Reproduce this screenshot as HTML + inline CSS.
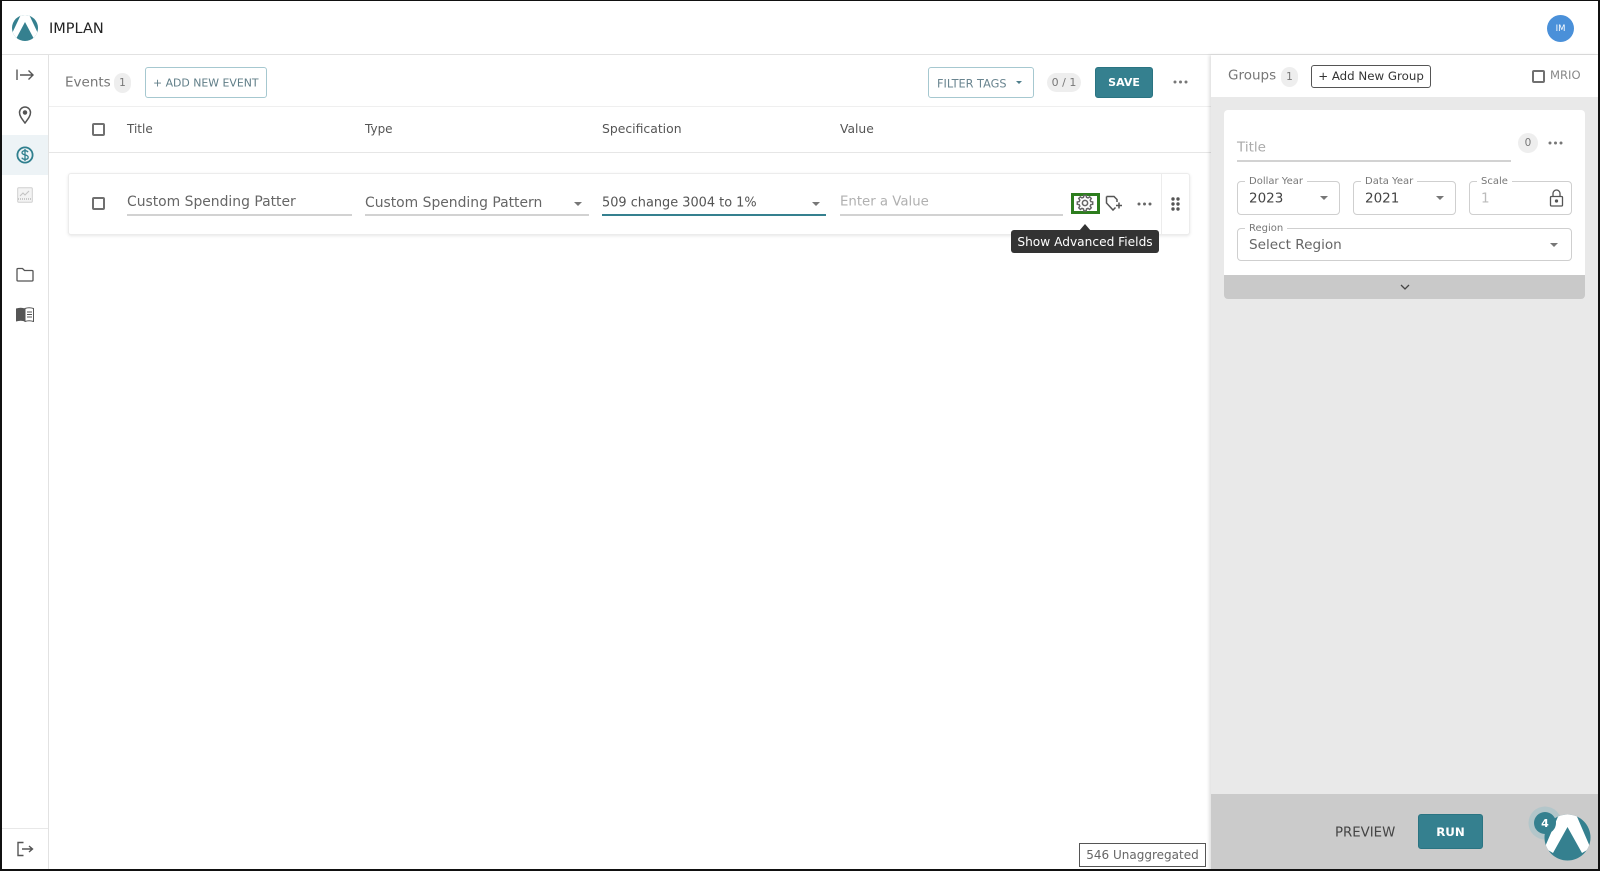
<!DOCTYPE html>
<html><head><meta charset="utf-8"><style>
html,body{margin:0;padding:0;background:#fff}
#p{position:relative;width:1600px;height:871px;overflow:hidden;background:#fff;font-family:"DejaVu Sans","Liberation Sans",sans-serif;color:#555}
#p div,#p svg,#p span.t{position:absolute}
.t{white-space:nowrap;line-height:1;transform:translateY(calc(-50% + 2px))}
.cb{width:9px;height:9px;border:2px solid #707070;border-radius:2px;background:#fff}
.ul{height:2px;background:#d2d2d2}
.f{border:1px solid #cfcfcf;border-radius:4px;background:#fff;box-sizing:border-box}
.lb{background:#fff;padding:0 4px;font-size:10px;color:#777}
.bd{background:#eee;border-radius:50%;text-align:center;color:#777}
.car{width:0;height:0;border-left:5px solid transparent;border-right:5px solid transparent;border-top:5px solid #777}
</style></head><body><div id="p">
<!-- header -->
<svg style="left:12px;top:15px" width="26" height="26" viewBox="0 0 26 26"><defs><clipPath id="c1"><circle cx="13" cy="13" r="13"/></clipPath></defs><circle cx="13" cy="13" r="13" fill="#35808f"/><path clip-path="url(#c1)" d="M9.200 -1H16.800L26.500 19.500 21.500 23 13 7 4.500 23 -.5 19.500Z" fill="#fff"/></svg>
<span class="t" style="left:49px;top:27px;font-size:14.500px;color:#222">IMPLAN</span>
<div style="left:1547px;top:15px;width:27px;height:27px;border-radius:50%;background:#4a90d9;color:#fff;font-size:8.500px;line-height:28px;text-align:center">IM</div>
<div style="left:0;top:54px;width:1600px;height:1px;background:#e2e2e2"></div>
<!-- sidebar -->
<div style="left:48px;top:55px;width:1px;height:815px;background:#e2e2e2"></div>
<div style="left:2px;top:135px;width:46px;height:40px;background:#edf3f6"></div>
<svg style="left:15px;top:66px" width="20" height="18" viewBox="0 0 20 18" fill="none" stroke="#555" stroke-width="1.400"><path d="M2 3.500V14M5 9H18M13.500 4.500L18 9l-4.500 4.500"/></svg>
<svg style="left:17px;top:106px" width="16" height="18" viewBox="0 0 16 18" fill="none" stroke="#555" stroke-width="1.500"><path d="M8 17C5 13 2.500 10 2.500 6.500a5.500 5.500 0 0 1 11 0C13.500 10 11 13 8 17Z"/><circle cx="8" cy="6.500" r="1.500" fill="#555"/></svg>
<svg style="left:16px;top:146px" width="18" height="18" viewBox="0 0 18 18" fill="none" stroke="#2f7f8e" stroke-width="1.800"><circle cx="9" cy="9" r="7.600"/><path d="M12 6.200C11.400 5 10.200 4.700 9 4.700 7.400 4.700 6 5.400 6 6.800 6 9.500 12.200 8.300 12.200 11.200 12.200 12.600 10.700 13.300 9 13.300 7.600 13.300 6.400 12.800 5.800 11.700M9 3v12" stroke-width="1.300"/></svg>
<svg style="left:17px;top:187px" width="16" height="16" viewBox="0 0 16 16" fill="none"><rect x=".7" y=".7" width="14.600" height="14.600" rx="1" fill="#f3f3f3" stroke="#cfcfcf"/><path d="M3 9l3-3 2 2 4-4" stroke="#c4c4c4" stroke-width="1.100"/><path d="M1 12h14" stroke="#c8c8c8" stroke-width="2" stroke-dasharray="1 1"/></svg>
<svg style="left:16px;top:267px" width="18" height="15" viewBox="0 0 18 15" fill="none" stroke="#555" stroke-width="1.300"><path d="M1 13V2.500Q1 1.500 2 1.500H6.500L8.500 3.500H16Q17 3.500 17 4.500V13Q17 14 16 14H2Q1 14 1 13Z"/></svg>
<svg style="left:16px;top:307px" width="18" height="15" viewBox="0 0 18 15"><path d="M0 1.500Q5 0 9 1.500V14.500Q5 13 0 14.500Z" fill="#555"/><path d="M9 1.500Q13 0 17.500 1.500V14.500Q13 13 9 14.500Z" fill="#fff" stroke="#555"/><path d="M11 5h5M11 7.500h5M11 10h5" stroke="#555"/></svg>
<div style="left:2px;top:828px;width:46px;height:1px;background:#e8e8e8"></div>
<svg style="left:16px;top:841px" width="18" height="16" viewBox="0 0 18 16" fill="none" stroke="#555" stroke-width="1.400"><path d="M7.500 1.500H2V14.500H7.500M6 8H16.500M13 5l3.500 3-3.500 3"/></svg>
<!-- toolbar -->
<span class="t" style="left:65px;top:81px;font-size:13.500px;color:#777">Events</span>
<div class="bd" style="left:114px;top:73px;width:17px;height:20px;font-size:10.500px;line-height:21px;border-radius:9px">1</div>
<div style="left:145px;top:67px;width:122px;height:31px;box-sizing:border-box;border:1px solid #a6c8d0;border-radius:3px"></div>
<span class="t" style="left:153px;top:82px;font-size:10.900px;color:#5f7d87">+ ADD NEW EVENT</span>
<div style="left:928px;top:67px;width:106px;height:31px;box-sizing:border-box;border:1px solid #a6c8d0;border-radius:3px"></div>
<span class="t" style="left:937px;top:82px;font-size:11.300px;color:#6a8590">FILTER TAGS</span>
<div class="car" style="left:1016px;top:81px;border-left-width:3.500px;border-right-width:3.500px;border-top:3.500px solid #4f7f8c"></div>
<div style="left:1047px;top:73px;width:34px;height:19px;border-radius:10px;background:#eee;color:#777;font-size:11px;line-height:19px;text-align:center">0 / 1</div>
<div style="left:1095px;top:67px;width:58px;height:31px;box-sizing:border-box;background:#35808f;border:1px solid #2a7482;border-radius:3px;color:#fff;font-size:11px;font-weight:bold;line-height:29px;text-align:center">SAVE</div>
<svg style="left:1173px;top:80px" width="15" height="4"><circle cx="2" cy="2" r="1.500" fill="#777"/><circle cx="7.500" cy="2" r="1.500" fill="#777"/><circle cx="13" cy="2" r="1.500" fill="#777"/></svg>
<div style="left:49px;top:106px;width:1162px;height:1px;background:#efefef"></div>
<!-- table head -->
<div class="cb" style="left:92px;top:123px"></div>
<span class="t" style="left:127px;top:127px;font-size:12px;color:#555">Title</span>
<span class="t" style="left:365px;top:127px;font-size:12px;color:#555">Type</span>
<span class="t" style="left:602px;top:127px;font-size:12.400px;color:#555">Specification</span>
<span class="t" style="left:840px;top:127px;font-size:12.300px;color:#555">Value</span>
<div style="left:49px;top:152px;width:1162px;height:1px;background:#e6e6e6"></div>
<!-- card -->
<div style="left:68px;top:173px;width:1122px;height:62px;box-sizing:border-box;border:1px solid #ececec;border-radius:3px;background:#fff;box-shadow:0 1px 3px rgba(0,0,0,.1)"></div>
<div class="cb" style="left:92px;top:197px"></div>
<span class="t" style="left:127px;top:201px;font-size:13.900px;color:#666">Custom Spending Patter</span>
<div class="ul" style="left:127px;top:214px;width:225px"></div>
<span class="t" style="left:365px;top:202px;font-size:13.900px;color:#666">Custom Spending Pattern</span>
<div class="ul" style="left:365px;top:214px;width:224px"></div>
<div class="car" style="left:574px;top:202px;border-left-width:4.500px;border-right-width:4.500px;border-top-width:4.500px"></div>
<span class="t" style="left:602px;top:202px;font-size:12.900px;color:#555">509 change 3004 to 1%</span>
<div class="ul" style="left:602px;top:214px;width:224px;background:#35808f"></div>
<div class="car" style="left:812px;top:202px;border-left-width:4.500px;border-right-width:4.500px;border-top-width:4.500px"></div>
<span class="t" style="left:840px;top:200px;font-size:13.300px;color:#b0b0b0">Enter a Value</span>
<div class="ul" style="left:840px;top:214px;width:223px"></div>
<div style="left:1071px;top:193px;width:29px;height:21px;box-sizing:border-box;border:3px solid #2d7d1e"></div>
<svg style="left:1076px;top:194px" width="18" height="18" viewBox="0 0 24 24" fill="none" stroke="#666" stroke-width="2.100"><circle cx="12" cy="12" r="3.500"/><path d="M10.300 2h3.400l.5 2.800 2.200.9 2.300-1.600 2.400 2.400-1.600 2.300.9 2.200 2.800.5v3.400l-2.800.5-.9 2.200 1.600 2.300-2.400 2.400-2.300-1.600-2.200.9-.5 2.800h-3.400l-.5-2.800-2.200-.9-2.300 1.600-2.400-2.400 1.600-2.300-.9-2.200-2.800-.5v-3.400l2.800-.5.9-2.200-1.600-2.300 2.400-2.400 2.300 1.600 2.200-.9Z" transform="translate(12 12) scale(.92) translate(-12 -13)"/></svg>
<svg style="left:1105px;top:195px" width="18" height="17" viewBox="0 0 18 17" fill="none" stroke="#555" stroke-width="1.500"><path d="M1.500 1.500H9L12 4.500V7M1.500 1.500V8L8 15 10.500 12.500"/><path d="M11 10.500h6M14 7.500v6"/></svg>
<svg style="left:1137px;top:202px" width="15" height="4"><circle cx="2" cy="2" r="1.500" fill="#666"/><circle cx="7.500" cy="2" r="1.500" fill="#666"/><circle cx="13" cy="2" r="1.500" fill="#666"/></svg>
<div style="left:1161px;top:174px;width:1px;height:60px;background:#ececec"></div>
<svg style="left:1171px;top:197px" width="9" height="14" fill="#555"><circle cx="2" cy="2" r="1.700"/><circle cx="7" cy="2" r="1.700"/><circle cx="2" cy="7" r="1.700"/><circle cx="7" cy="7" r="1.700"/><circle cx="2" cy="12" r="1.700"/><circle cx="7" cy="12" r="1.700"/></svg>
<!-- tooltip -->
<svg style="left:1079px;top:224px" width="12" height="7"><path d="M0 7L6 0l6 7Z" fill="#333"/></svg>
<div style="left:1011px;top:230px;width:148px;height:23px;background:#333;border-radius:3px;color:#fff;font-size:12.200px;line-height:24px;text-align:center;white-space:nowrap">Show Advanced Fields</div>
<!-- unaggregated -->
<div style="left:1079px;top:843px;width:127px;height:24px;box-sizing:border-box;border:1px solid #555;background:#fff;color:#666;font-size:12px;line-height:22px;text-align:center;white-space:nowrap">546 Unaggregated</div>
<!-- right panel -->
<div style="left:1211px;top:55px;width:387px;height:815px;background:#e9e9e9;box-shadow:-2px 0 3px rgba(0,0,0,.12)"></div>
<div style="left:1211px;top:55px;width:387px;height:42px;background:#fff"></div>
<span class="t" style="left:1228px;top:74px;font-size:13.500px;color:#777">Groups</span>
<div class="bd" style="left:1281px;top:67px;width:17px;height:20px;font-size:10.500px;line-height:21px;border-radius:9px">1</div>
<div style="left:1311px;top:65px;width:120px;height:23px;box-sizing:border-box;border:1px solid #555;border-radius:3px;background:#fff;color:#333;font-size:11.800px;line-height:20px;text-align:center;white-space:nowrap">+ Add New Group</div>
<div class="cb" style="left:1532px;top:70px"></div>
<span class="t" style="left:1550px;top:74px;font-size:11.600px;color:#888">MRIO</span>
<!-- group card -->
<div style="left:1224px;top:110px;width:361px;height:188px;background:#fff;border-radius:4px"></div>
<div style="left:1224px;top:275px;width:361px;height:24px;background:#c9c9c9;border-radius:0 0 4px 4px"></div>
<svg style="left:1400px;top:284px" width="10" height="7" fill="none" stroke="#444" stroke-width="1.300"><path d="M1 1l4 4 4-4"/></svg>
<span class="t" style="left:1237px;top:146px;font-size:13.500px;color:#aaa">Title</span>
<div class="ul" style="left:1237px;top:160px;width:274px"></div>
<div class="bd" style="left:1518px;top:133px;width:20px;height:20px;font-size:10.500px;line-height:20px">0</div>
<svg style="left:1548px;top:141px" width="15" height="4"><circle cx="2" cy="2" r="1.500" fill="#777"/><circle cx="7.500" cy="2" r="1.500" fill="#777"/><circle cx="13" cy="2" r="1.500" fill="#777"/></svg>
<div class="f" style="left:1237px;top:181px;width:103px;height:34px"></div>
<span class="t lb" style="left:1245px;top:180px">Dollar Year</span>
<span class="t" style="left:1249px;top:197px;font-size:13.500px;color:#444">2023</span>
<div class="car" style="left:1320px;top:196px;border-left-width:4.500px;border-right-width:4.500px;border-top-width:4.500px"></div>
<div class="f" style="left:1353px;top:181px;width:103px;height:34px"></div>
<span class="t lb" style="left:1361px;top:180px">Data Year</span>
<span class="t" style="left:1365px;top:197px;font-size:13.500px;color:#444">2021</span>
<div class="car" style="left:1436px;top:196px;border-left-width:4.500px;border-right-width:4.500px;border-top-width:4.500px"></div>
<div class="f" style="left:1469px;top:181px;width:103px;height:34px"></div>
<span class="t lb" style="left:1477px;top:180px">Scale</span>
<span class="t" style="left:1481px;top:197px;font-size:13.500px;color:#bbb">1</span>
<svg style="left:1549px;top:189px" width="15" height="18" viewBox="0 0 15 18" fill="none" stroke="#555" stroke-width="1.300"><rect x="1.500" y="7.500" width="12" height="9.500" rx="1"/><path d="M4 7.500V4.500a3.500 3.500 0 0 1 7 0V7.500"/><circle cx="7.500" cy="12" r="1" fill="#555"/></svg>
<div class="f" style="left:1237px;top:228px;width:335px;height:33px"></div>
<span class="t lb" style="left:1245px;top:227px">Region</span>
<span class="t" style="left:1249px;top:244px;font-size:13.600px;color:#666">Select Region</span>
<div class="car" style="left:1550px;top:243px;border-left-width:4.500px;border-right-width:4.500px;border-top-width:4.500px"></div>
<!-- footer -->
<div style="left:1211px;top:794px;width:387px;height:76px;background:#cbcbcb"></div>
<span class="t" style="left:1335px;top:831px;font-size:13.300px;color:#444">PREVIEW</span>
<div style="left:1418px;top:814px;width:65px;height:35px;box-sizing:border-box;background:#35808f;border:1px solid #2a7482;border-radius:3px;color:#fff;font-size:11.800px;font-weight:bold;line-height:35px;text-align:center">RUN</div>
<svg style="left:1528px;top:806px" width="70" height="64" viewBox="0 0 70 64"><defs><clipPath id="c2"><circle cx="39.500" cy="31.500" r="23"/></clipPath></defs><circle cx="17" cy="17" r="16.500" fill="#b3c6ca"/><circle cx="39.500" cy="31.500" r="23" fill="#35808f"/><path clip-path="url(#c2)" d="M32 6H47L62.500 42 54 47 39.500 21 25 47 16.500 42Z" fill="#fff"/><circle cx="17" cy="17" r="11" fill="#35808f"/><text x="17" y="21" font-size="11" font-weight="bold" fill="#fff" text-anchor="middle" font-family="DejaVu Sans,sans-serif">4</text></svg>
<!-- outer frame -->
<div style="left:0;top:0;width:1600px;height:871px;box-sizing:border-box;border:solid #111;border-width:1px 2px 2px 2px"></div>
</div></body></html>
